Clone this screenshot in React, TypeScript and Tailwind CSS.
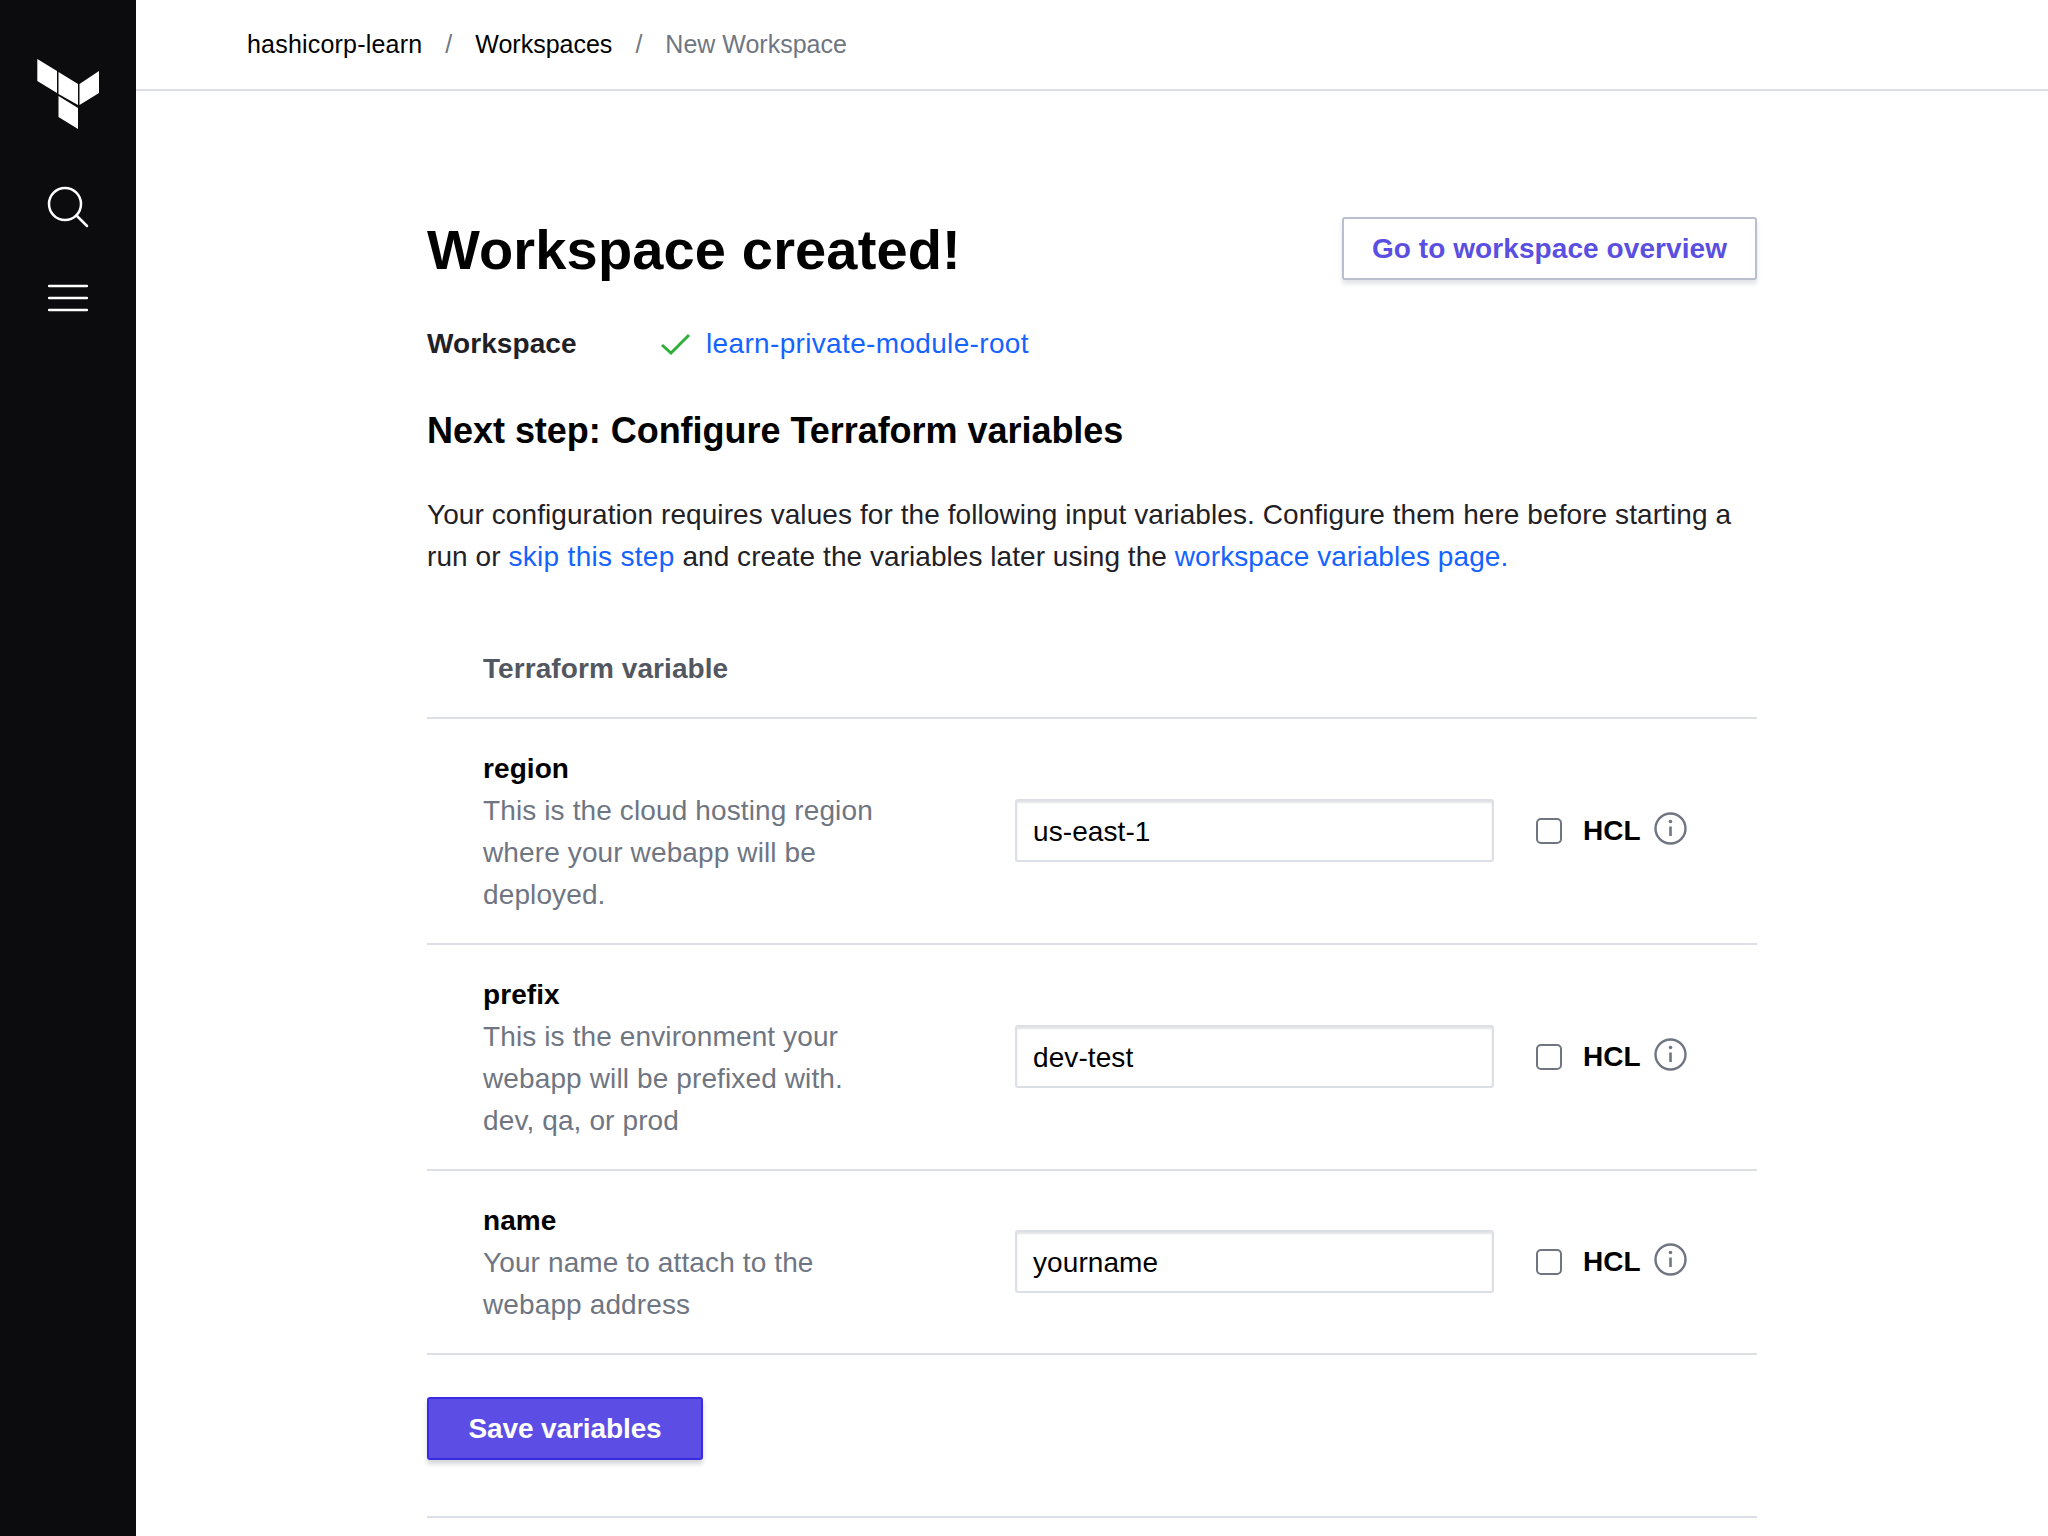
const variables = [
  { name: "region", lines: ["This is the cloud hosting region", "where your webapp will be", "deployed."], value: "us-east-1" },
  { name: "prefix", lines: ["This is the environment your", "webapp will be prefixed with.", "dev, qa, or prod"], value: "dev-test" },
  { name: "name", lines: ["Your name to attach to the", "webapp address"], value: "yourname" },
];

function Sidebar() {
  return (
    <aside className="w-[136px] shrink-0 bg-[#0c0c0e] flex flex-col items-center min-h-[1536px]">
      <svg className="mt-[58px]" width="64" height="72" viewBox="36 58 64 72" fill="#fff">
        <polygon points="37.3,59 57,71 57,93 37.3,81" />
        <polygon points="58.5,72 78,84 78,105 58.5,94" />
        <polygon points="79.5,84 99,71 99,93 79.5,105" />
        <polygon points="58.5,96 78,108 78,129 58.5,117" />
      </svg>
      <svg className="mt-[56px]" width="42" height="42" viewBox="47 186 42 42" fill="none" stroke="#fff" strokeWidth="2.5" strokeLinecap="round">
        <circle cx="65" cy="204" r="16" />
        <line x1="76.5" y1="215.5" x2="87" y2="226" />
      </svg>
      <svg className="mt-[56px]" width="40" height="28" viewBox="0 0 40 28" stroke="#fff" strokeWidth="2.5" strokeLinecap="round">
        <line x1="1" y1="2" x2="39" y2="2" />
        <line x1="1" y1="14" x2="39" y2="14" />
        <line x1="1" y1="26" x2="39" y2="26" />
      </svg>
    </aside>
  );
}

function Breadcrumb() {
  return (
    <nav className="h-[91px] border-b-2 border-[#dce0e6] flex items-center pl-[111px] text-[25px] text-black">
      <span className="tracking-[0.2px]">hashicorp-learn</span>
      <span className="mx-[23px] text-[#6f7682]">/</span>
      <span>Workspaces</span>
      <span className="mx-[23px] text-[#6f7682]">/</span>
      <span className="text-[#6f7682]">New Workspace</span>
    </nav>
  );
}

function InfoIcon() {
  return (
    <svg className="ml-[13px] -mt-[5px]" width="33" height="33" viewBox="0 0 33 33" fill="none" stroke="#6f7682" strokeWidth="2.4">
      <circle cx="16.5" cy="16.5" r="15" />
      <line x1="16.5" y1="14.5" x2="16.5" y2="24" strokeWidth="2.6" />
      <circle cx="16.5" cy="9.5" r="1.8" fill="#6f7682" stroke="none" />
    </svg>
  );
}

function VariableRow({ name, lines, value }: { name: string; lines: string[]; value: string }) {
  return (
    <div className="flex items-center border-b-2 border-[#dce0e6] pl-[56px] py-[28px]">
      <div className="w-[532px] shrink-0 pt-[1px] -mb-[1px]">
        <div className="font-bold text-black">{name}</div>
        {lines.map((line) => (
          <div key={line} className="text-[#6f7682] tracking-[0.12px]">{line}</div>
        ))}
      </div>
      <input
        readOnly
        value={value}
        className="w-[479px] h-[63px] -mt-[2px] pl-[16px] pr-[16px] pt-[4px] rounded-[3px] border-2 border-[#dce0e6] shadow-[inset_0_2px_2px_rgba(111,118,130,0.2)] text-black outline-none"
      />
      <span className="ml-[42px] w-[26px] h-[26px] rounded-[5px] border-2 border-[#6f7682] bg-white" />
      <span className="ml-[21px] font-bold text-black">HCL</span>
      <InfoIcon />
    </div>
  );
}

export default function App() {
  return (
    <div className="flex bg-white min-h-[1536px] overflow-hidden font-['Liberation_Sans',Arial,sans-serif]">
      <Sidebar />
      <main className="flex-1">
        <Breadcrumb />
        <div className="ml-[291px] w-[1330px] text-[28px] tracking-[0.08px] leading-[42px] text-[#1f2126]">
          <div className="flex items-center justify-between pt-[126px]">
            <h1 className="text-[56px] leading-[66px] tracking-[0.15px] font-bold text-black">Workspace created!</h1>
            <button className="w-[415px] h-[63px] mb-[3px] rounded-[3px] border-2 border-[#babfce] bg-white shadow-[0_4px_4px_rgba(111,118,130,0.2)] text-[#5a4fe0] font-bold">
              Go to workspace overview
            </button>
          </div>
          <div className="flex items-center mt-[40px]">
            <span className="w-[234px] font-bold">Workspace</span>
            <svg className="mr-[15px] w-[30px] h-[22px]" viewBox="0 0 30 22" fill="none" stroke="#2eb039" strokeWidth="3">
              <path d="M1 12l9 8L28 2" />
            </svg>
            <a className="text-[#1563ff] tracking-[0.34px]">learn-private-module-root</a>
          </div>
          <h2 className="mt-[45px] text-[36px] leading-[42px] tracking-[-0.03px] font-bold text-black">Next step: Configure Terraform variables</h2>
          <p className="mt-[42px]">
            Your configuration requires values for the following input variables. Configure them here before starting a
            <br />
            run or <a className="text-[#1563ff] tracking-[0.3px]">skip this step</a> <span className="tracking-[0.05px]">and create the variables later using the</span>{" "}
            <a className="text-[#1563ff]">workspace variables page.</a>
          </p>
          <div className="mt-[70px] pl-[56px] pb-[27px] border-b-2 border-[#dce0e6] font-bold text-[#525761]">Terraform variable</div>
          {variables.map((v) => (
            <VariableRow key={v.name} {...v} />
          ))}
          <button className="mt-[42px] w-[276px] h-[63px] rounded-[3px] border-2 border-[#3b2be0] bg-[#5c4ee5] shadow-[0_4px_4px_rgba(111,118,130,0.3)] text-white font-bold tracking-[-0.1px]">
            Save variables
          </button>
          <div className="mt-[56px] border-b-2 border-[#dce0e6]" />
        </div>
      </main>
    </div>
  );
}
